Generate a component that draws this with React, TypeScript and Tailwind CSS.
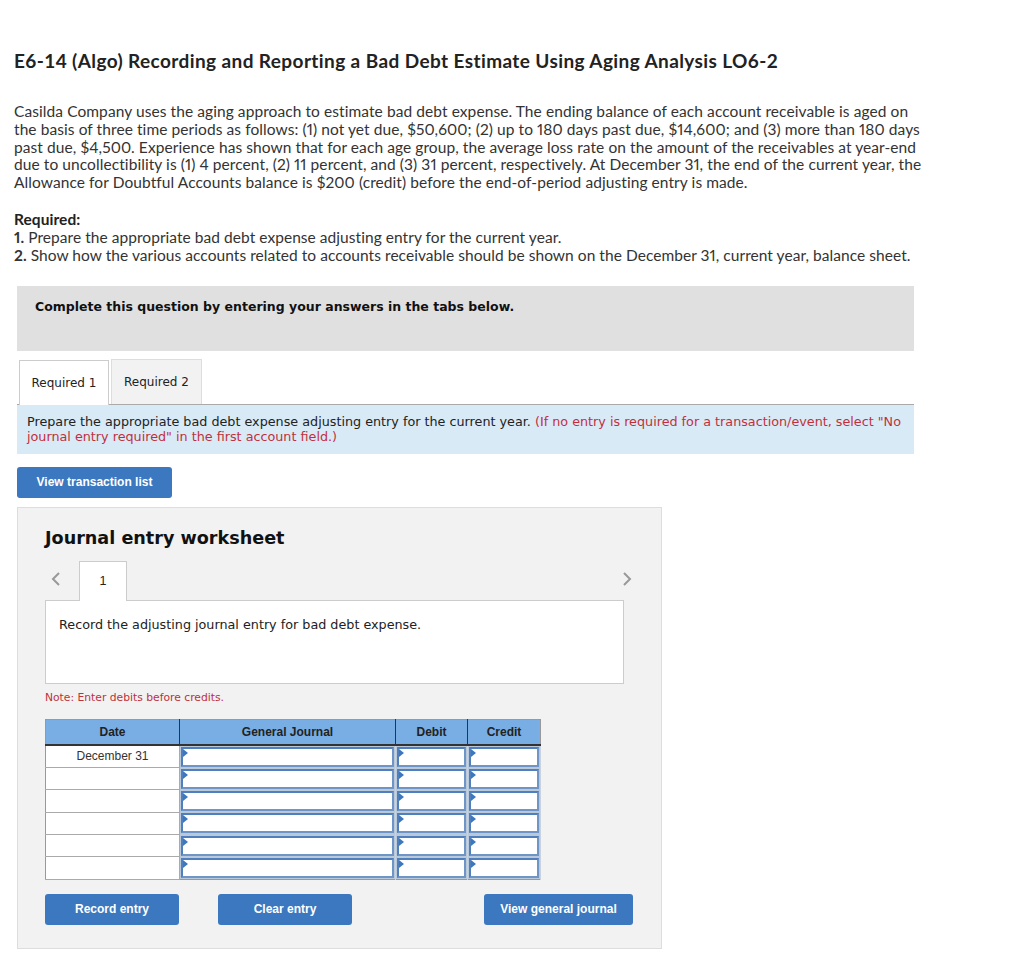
import { FC } from "react";

const body = { fontFamily: "Lato, 'Open Sans', sans-serif" };
const verdana = { fontFamily: "'DejaVu Sans', Verdana, sans-serif" };
const arial = { fontFamily: "'Liberation Sans', Arial, sans-serif" };

const InputCell: FC<{ w: string }> = ({ w }) => (
  <td className={`${w} p-0 bg-[#b9c9da] border-x border-[#c8d3df]`}>
    <div className="relative h-[20px] mx-[1px] my-[1px] bg-white border-2 border-[#4f7fbd] border-r-[#6f95c6] border-b-[#6f95c6]">
      {/* little marker in the corner */}
      <div className="absolute left-0 top-0 w-0 h-0 border-t-[4px] border-b-[4px] border-l-[5px] border-t-transparent border-b-transparent border-l-[#3b78bf]" />
    </div>
  </td>
);

const rows = ["December 31", "", "", "", "", ""];

const lines = [
  "Casilda Company uses the aging approach to estimate bad debt expense. The ending balance of each account receivable is aged on",
  "the basis of three time periods as follows: (1) not yet due, $50,600; (2) up to 180 days past due, $14,600; and (3) more than 180 days",
  "past due, $4,500. Experience has shown that for each age group, the average loss rate on the amount of the receivables at year-end",
  "due to uncollectibility is (1) 4 percent, (2) 11 percent, and (3) 31 percent, respectively. At December 31, the end of the current year, the",
  "Allowance for Doubtful Accounts balance is $200 (credit) before the end-of-period adjusting entry is made.",
];

const Btn: FC<{ w: string; label: string; cls?: string }> = ({ w, label, cls = "" }) => (
  <button className={`${w} ${cls} h-[31px] rounded-[3px] bg-[#3b78bf] text-white text-[12px] font-bold`} style={arial}>
    {label}
  </button>
);

const App: FC = () => (
  <div className="w-[1024px] min-h-[968px] bg-white text-[#333]" style={body}>
    <div className="pl-[14px] pt-[49px]">
      {/* Header */}
      <h1 className="text-[19px] font-bold text-[#222] leading-[24px] tracking-[0.4px]">
        E6-14 (Algo) Recording and Reporting a Bad Debt Estimate Using Aging Analysis LO6-2
      </h1>

      {/* Problem text */}
      <div className="mt-[30px] text-[15.5px] leading-[17.8px] tracking-[0.08px] text-[#333] proportional-nums">
        {lines.map((l, i) => (
          <div key={i} className="whitespace-nowrap">{l}</div>
        ))}
      </div>

      <div className="mt-[18px] text-[15.5px] leading-[18px] tracking-[0.05px] whitespace-nowrap proportional-nums">
        <div className="font-bold text-[#222]">Required:</div>
        <div><span className="font-bold">1.</span> Prepare the appropriate bad debt expense adjusting entry for the current year.</div>
        <div><span className="font-bold">2.</span> Show how the various accounts related to accounts receivable should be shown on the December 31, current year, balance sheet.</div>
      </div>
    </div>

    <div className="ml-[17px] w-[897px] mt-[22px]" style={verdana}>
      {/* Instruction banner */}
      <div className="h-[65px] bg-[#e0e0e0] pl-[18px] pt-[12px] text-[12.5px] font-bold text-[#111]">
        Complete this question by entering your answers in the tabs below.
      </div>

      {/* Tabs */}
      <div className="mt-[8px] flex items-end border-b border-[#aaa] pl-[2px]">
        <div className="w-[90px] h-[45px] bg-white border border-b-0 border-[#ccc] flex items-center justify-center text-[12px] text-[#222] -mb-px">
          Required 1
        </div>
        <div className="ml-[2px] w-[91px] h-[45px] bg-[#f2f2f2] border border-b-0 border-[#ddd] flex items-center justify-center text-[12px] text-[#222]">
          Required 2
        </div>
      </div>

      <div className="h-[49px] bg-[#d9eaf7] px-[10px] pt-[9px] text-[12.75px] leading-[15px] text-[#222]">
        Prepare the appropriate bad debt expense adjusting entry for the current year.{" "}
        <span className="text-[#c0303c]">(If no entry is required for a transaction/event, select "No journal entry required" in the first account field.)</span>
      </div>

      <div className="mt-[13px]">
        <Btn w="w-[155px]" label="View transaction list" cls="h-[30px]" />
      </div>

      {/* Worksheet */}
      <div className="mt-[9px] w-[645px] h-[442px] bg-[#f2f2f2] border border-[#ddd] pl-[27px] pr-[37px] pt-[18px]">
        <h2 className="text-[17.6px] font-bold text-[#111] leading-[24px]">Journal entry worksheet</h2>

        <div className="mt-[11px] flex items-end relative">
          <span className="w-[34px] pl-[6px] pb-[13px]">
            <svg width="10" height="16" viewBox="0 0 10 16"><path d="M8 2 L2 8 L8 14" fill="none" stroke="#999" strokeWidth="2" /></svg>
          </span>
          <div className="w-[48px] h-[40px] bg-white border border-b-0 border-[#ccc] flex items-center justify-center text-[12.5px] text-[#222] -mb-px relative z-10" style={arial}>
            1
          </div>
          <span className="ml-auto mr-[-8px] pb-[13px]">
            <svg width="10" height="16" viewBox="0 0 10 16"><path d="M2 2 L8 8 L2 14" fill="none" stroke="#999" strokeWidth="2" /></svg>
          </span>
        </div>
        <div className="h-[84px] bg-white border border-[#ccc] pl-[13px] pt-[14px] text-[12.75px] text-[#222]">
          Record the adjusting journal entry for bad debt expense.
        </div>

        <div className="mt-[6px] text-[10.75px] text-[#c0303c]">Note: Enter debits before credits.</div>

        <table className="mt-[13px] border-collapse border border-[#999] text-[12px]" style={arial}>
          <thead>
            <tr className="h-[25px] bg-[#78aee4] text-[#222] font-bold">
              <th className="w-[134px] border-r border-b-2 border-[#333] font-bold">Date</th>
              <th className="w-[216px] border-r border-b-2 border-[#333] font-bold">General Journal</th>
              <th className="w-[72px] border-r border-b-2 border-[#333] font-bold">Debit</th>
              <th className="w-[73px] border-b-2 border-[#333] font-bold">Credit</th>
            </tr>
          </thead>
          <tbody>
            {rows.map((d, i) => (
              <tr key={i} className="h-[22.3px]">
                <td className="w-[134px] bg-white border-b border-r border-[#aaa] text-center text-[#333] p-0 leading-[20px]">{d}</td>
                <InputCell w="w-[216px]" />
                <InputCell w="w-[72px]" />
                <InputCell w="w-[73px]" />
              </tr>
            ))}
          </tbody>
        </table>

        <div className="mt-[14px] flex items-center w-[588px]">
          <Btn w="w-[134px]" label="Record entry" />
          <Btn w="w-[134px]" label="Clear entry" cls="ml-[39px]" />
          <Btn w="w-[149px]" label="View general journal" cls="ml-auto" />
        </div>
      </div>
    </div>
  </div>
);

export default App;
